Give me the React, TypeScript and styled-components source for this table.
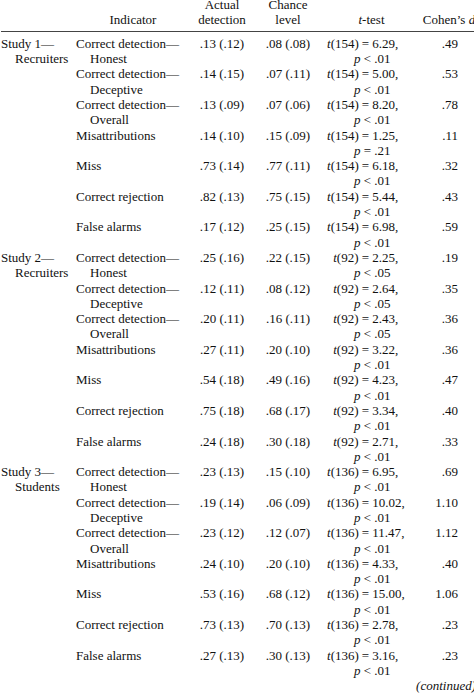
import React from "react";
import styled, { createGlobalStyle } from "styled-components";

interface Row {
  indicator: string;
  sub?: string;
  actual: string;
  chance: string;
  df: number;
  t: string;
  p: string;
  d: string;
}

interface Study {
  title: string;
  group: string;
  rows: Row[];
}

const cd = "Correct detection—";

const studies: Study[] = [
  {
    title: "Study 1—",
    group: "Recruiters",
    rows: [
      { indicator: cd, sub: "Honest", actual: ".13 (.12)", chance: ".08 (.08)", df: 154, t: "6.29", p: "< .01", d: ".49" },
      { indicator: cd, sub: "Deceptive", actual: ".14 (.15)", chance: ".07 (.11)", df: 154, t: "5.00", p: "< .01", d: ".53" },
      { indicator: cd, sub: "Overall", actual: ".13 (.09)", chance: ".07 (.06)", df: 154, t: "8.20", p: "< .01", d: ".78" },
      { indicator: "Misattributions", actual: ".14 (.10)", chance: ".15 (.09)", df: 154, t: "1.25", p: "= .21", d: ".11" },
      { indicator: "Miss", actual: ".73 (.14)", chance: ".77 (.11)", df: 154, t: "6.18", p: "< .01", d: ".32" },
      { indicator: "Correct rejection", actual: ".82 (.13)", chance: ".75 (.15)", df: 154, t: "5.44", p: "< .01", d: ".43" },
      { indicator: "False alarms", actual: ".17 (.12)", chance: ".25 (.15)", df: 154, t: "6.98", p: "< .01", d: ".59" },
    ],
  },
  {
    title: "Study 2—",
    group: "Recruiters",
    rows: [
      { indicator: cd, sub: "Honest", actual: ".25 (.16)", chance: ".22 (.15)", df: 92, t: "2.25", p: "< .05", d: ".19" },
      { indicator: cd, sub: "Deceptive", actual: ".12 (.11)", chance: ".08 (.12)", df: 92, t: "2.64", p: "< .05", d: ".35" },
      { indicator: cd, sub: "Overall", actual: ".20 (.11)", chance: ".16 (.11)", df: 92, t: "2.43", p: "< .05", d: ".36" },
      { indicator: "Misattributions", actual: ".27 (.11)", chance: ".20 (.10)", df: 92, t: "3.22", p: "< .01", d: ".36" },
      { indicator: "Miss", actual: ".54 (.18)", chance: ".49 (.16)", df: 92, t: "4.23", p: "< .01", d: ".47" },
      { indicator: "Correct rejection", actual: ".75 (.18)", chance: ".68 (.17)", df: 92, t: "3.34", p: "< .01", d: ".40" },
      { indicator: "False alarms", actual: ".24 (.18)", chance: ".30 (.18)", df: 92, t: "2.71", p: "< .01", d: ".33" },
    ],
  },
  {
    title: "Study 3—",
    group: "Students",
    rows: [
      { indicator: cd, sub: "Honest", actual: ".23 (.13)", chance: ".15 (.10)", df: 136, t: "6.95", p: "< .01", d: ".69" },
      { indicator: cd, sub: "Deceptive", actual: ".19 (.14)", chance: ".06 (.09)", df: 136, t: "10.02", p: "< .01", d: "1.10" },
      { indicator: cd, sub: "Overall", actual: ".23 (.12)", chance: ".12 (.07)", df: 136, t: "11.47", p: "< .01", d: "1.12" },
      { indicator: "Misattributions", actual: ".24 (.10)", chance: ".20 (.10)", df: 136, t: "4.33", p: "< .01", d: ".40" },
      { indicator: "Miss", actual: ".53 (.16)", chance: ".68 (.12)", df: 136, t: "15.00", p: "< .01", d: "1.06" },
      { indicator: "Correct rejection", actual: ".73 (.13)", chance: ".70 (.13)", df: 136, t: "2.78", p: "< .01", d: ".23" },
      { indicator: "False alarms", actual: ".27 (.13)", chance: ".30 (.13)", df: 136, t: "3.16", p: "< .01", d: ".23" },
    ],
  },
];

const GlobalStyle = createGlobalStyle`
  html, body {
    margin: 0;
    padding: 0;
    background: #ffffff;
    overflow: hidden;
  }
  body {
    font-family: "Liberation Serif", "Times New Roman", serif;
    font-size: 13px;
    line-height: 15.3px;
    color: #111111;
  }
`;

const Page = styled.div`
  width: 476px;
  margin-top: -3px;
  padding-left: 1px;
`;

const Table = styled.table`
  width: 476px;
  table-layout: fixed;
  border-collapse: collapse;
  border-spacing: 0;
`;

const HeadRow = styled.tr`
  border-bottom: 1.5px solid #444444;
`;

const HeadCell = styled.th`
  padding: 0 0 3px 0;
  font-weight: normal;
  text-align: center;
  vertical-align: bottom;
  white-space: nowrap;
`;

const BodyRow = styled.tr`
  &:first-child > td {
    padding-top: 4.2px;
  }
`;

const Cell = styled.td<{ $align?: "left" | "center" | "right"; $padRight?: number; $padLeft?: number }>`
  padding: 0 ${(p) => p.$padRight ?? 0}px 0 ${(p) => p.$padLeft ?? 0}px;
  text-align: ${(p) => p.$align ?? "left"};
  vertical-align: top;
  white-space: nowrap;
  height: 30.6px;
`;

const Line = styled.div<{ $indent?: number }>`
  padding-left: ${(p) => p.$indent ?? 0}px;
`;

const Lhs = styled.span`
  display: inline-block;
  width: 31.5px;
  text-align: right;
`;

const Em = styled.i`
  font-style: italic;
`;

const Continued = styled.div`
  text-align: right;
  font-style: italic;
  padding-right: 1px;
`;

const TTest = ({ row }: { row: Row }) => (
  <>
    <Line>
      <Lhs>
        <Em>t</Em>({row.df})
      </Lhs>{" "}
      = {row.t},
    </Line>
    <Line $indent={27}>
      <Em>p</Em> {row.p}
    </Line>
  </>
);

export default function App() {
  return (
    <>
      <GlobalStyle />
      <Page>
        <Table>
          <colgroup>
            <col style={{ width: 75 }} />
            <col style={{ width: 114 }} />
            <col style={{ width: 64 }} />
            <col style={{ width: 68 }} />
            <col style={{ width: 99 }} />
            <col style={{ width: 56 }} />
          </colgroup>
          <thead>
            <HeadRow>
              <HeadCell />
              <HeadCell>Indicator</HeadCell>
              <HeadCell>
                Actual
                <br />
                detection
              </HeadCell>
              <HeadCell>
                Chance
                <br />
                level
              </HeadCell>
              <HeadCell>
                <Em>t</Em>-test
              </HeadCell>
              <HeadCell>
                Cohen’s <Em>d</Em>
              </HeadCell>
            </HeadRow>
          </thead>
          <tbody>
            {studies.map((study) =>
              study.rows.map((row, i) => (
                <BodyRow key={study.title + i}>
                  <Cell>
                    {i === 0 && (
                      <>
                        <Line>{study.title}</Line>
                        <Line $indent={14}>{study.group}</Line>
                      </>
                    )}
                  </Cell>
                  <Cell>
                    <Line>{row.indicator}</Line>
                    {row.sub && <Line $indent={14}>{row.sub}</Line>}
                  </Cell>
                  <Cell $align="center">{row.actual}</Cell>
                  <Cell $align="center">{row.chance}</Cell>
                  <Cell $padLeft={5}>
                    <TTest row={row} />
                  </Cell>
                  <Cell $align="right" $padRight={19}>
                    {row.d}
                  </Cell>
                </BodyRow>
              ))
            )}
          </tbody>
        </Table>
        <Continued>(continued)</Continued>
      </Page>
    </>
  );
}
